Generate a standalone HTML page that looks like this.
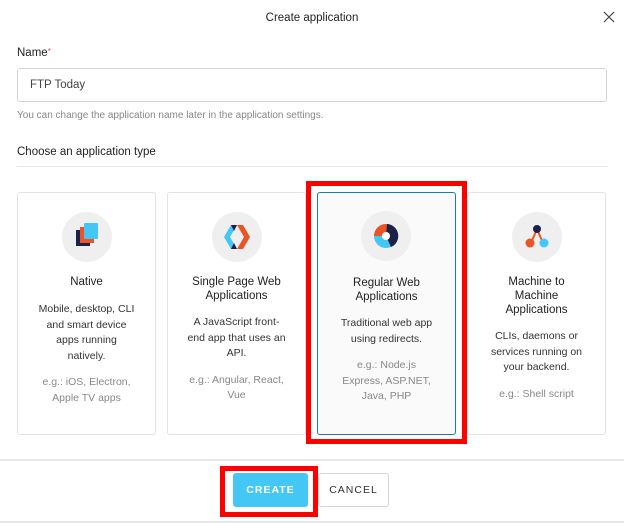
<!DOCTYPE html>
<html><head><style>
*{margin:0;padding:0;box-sizing:border-box}
body{width:624px;height:523px;background:#fff;font-family:"Liberation Sans",sans-serif;color:#333;position:relative;overflow:hidden}
.a{position:absolute}
.card{position:absolute;top:192px;width:139px;height:243px;border:1px solid #e3e3e3;border-radius:3px;background:#fff;text-align:center}
.ic{position:absolute;left:44px;top:19px;width:50px;height:50px;border-radius:50%;background:#efefef}
.t{position:absolute;left:0;right:0;top:82px;font-size:11.5px;line-height:14px;color:#222;white-space:nowrap}
.d{font-size:10.5px;line-height:15.5px;color:#333;margin-top:12px}
.e{font-size:10.5px;line-height:15.5px;color:#888;margin-top:11px}
</style></head><body>
<div class="a" style="left:0;top:12px;width:624px;text-align:center;font-size:11.5px;color:#222">Create application</div>
<svg class="a" style="left:603px;top:11px" width="12" height="12"><path d="M1 1L11 11M11 1L1 11" stroke="#444" stroke-width="1.2"/></svg>
<div class="a" style="left:17px;top:47px;font-size:11.5px;color:#222">Name<span style="color:#e0454a;font-size:8px;vertical-align:top">*</span></div>
<div class="a" style="left:17px;top:68px;width:590px;height:34px;border:1px solid #d6d6d6;border-radius:3px;font-size:11.5px;color:#444;padding:10px 0 0 12px">FTP Today</div>
<div class="a" style="left:17px;top:110px;font-size:10px;color:#888">You can change the application name later in the application settings.</div>
<div class="a" style="left:17px;top:146px;font-size:11.5px;color:#222">Choose an application type</div>
<div class="a" style="left:17px;top:166px;width:590px;height:1px;background:#e8e8e8"></div>

<div class="card" style="left:17px">
 <div class="ic"><svg width="50" height="50"><rect x="14" y="18" width="14" height="16" fill="#1b2148"/><rect x="18" y="15" width="14" height="16" fill="#eb5424"/><rect x="22" y="11" width="14" height="16" rx="1" fill="#44c7f4"/></svg></div>
 <div class="t">Native<div class="d" style="margin-top:13px">Mobile, desktop, CLI<br>and smart device<br>apps running<br>natively.</div><div class="e">e.g.: iOS, Electron,<br>Apple TV apps</div></div>
</div>
<div class="card" style="left:167px">
 <div class="ic"><svg width="50" height="50"><path d="M19 13L25 13L18 25L25 37L19 37L12 25Z" fill="#44c7f4"/><path d="M25 13L31 13L38 25L31 37L25 37L32 25Z" fill="#eb5424"/><path d="M19 13L25 13L22 19ZM19 37L25 37L22 31Z" fill="#1b2148"/></svg></div>
 <div class="t">Single Page Web<br>Applications<div class="d">A JavaScript front-<br>end app that uses an<br>API.</div><div class="e">e.g.: Angular, React,<br>Vue</div></div>
</div>
<div class="card" style="left:317px;background:#fafafa;border:1.5px solid #1a7fb0">
 <div class="ic" style="left:43px;top:18px"><svg width="50" height="50"><circle cx="25" cy="25" r="12" fill="#44c7f4"/><path d="M13 25A12 12 0 0 1 28 13.4L25 25Z" fill="#eb5424"/><path d="M26 13A12 12 0 0 1 30 36L25 25Z" fill="#1b2148"/><circle cx="25" cy="25" r="4" fill="#fff"/></svg></div>
 <div class="t" style="top:83px">Regular Web<br>Applications<div class="d">Traditional web app<br>using redirects.</div><div class="e">e.g.: Node.js<br>Express, ASP.NET,<br>Java, PHP</div></div>
</div>
<div class="card" style="left:467px">
 <div class="ic"><svg width="50" height="50"><path d="M25 17L19 31M25 17L31 31" stroke="#eb5424" stroke-width="2"/><circle cx="25" cy="17" r="4" fill="#1b2148"/><circle cx="18" cy="31" r="4.5" fill="#eb5424"/><circle cx="32" cy="31" r="4.5" fill="#44c7f4"/></svg></div>
 <div class="t">Machine to<br>Machine<br>Applications<div class="d">CLIs, daemons or<br>services running on<br>your backend.</div><div class="e">e.g.: Shell script</div></div>
</div>
<div class="a" style="left:306px;top:181px;width:161px;height:263px;border:5px solid #f00"></div>

<div class="a" style="left:0;top:459px;width:624px;height:2px;background:#e8e8e8"></div>
<div class="a" style="left:0;top:521px;width:624px;height:2px;background:#e8e8e8"></div>
<div class="a" style="left:318px;top:473px;width:71px;height:34px;border:1px solid #d6d6d6;border-radius:3px;font-size:10.5px;letter-spacing:1px;color:#333;text-align:center;line-height:32px">CANCEL</div>
<div class="a" style="left:233px;top:473px;width:75px;height:34px;background:#44c7f4;border-radius:3px;font-size:10.5px;letter-spacing:1px;color:#fff;text-align:center;line-height:34px;font-weight:bold">CREATE</div>
<div class="a" style="left:220px;top:466px;width:98px;height:51px;border:5px solid #f00"></div>
</body></html>
